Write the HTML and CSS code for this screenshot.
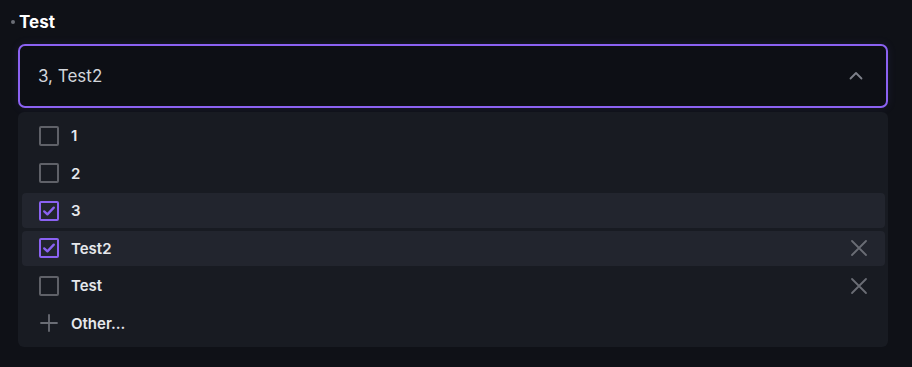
FILE: index.html
```html
<!DOCTYPE html>
<html>
<head>
<meta charset="utf-8">
<link rel="stylesheet" href="styles.css">
</head>
<body>
<div class="field">
  <div class="label"><span class="dot"></span><span class="label-text">Test</span></div>
  <div class="select">
    <span class="value">3, Test2</span>
    <svg class="chev" width="18" height="18" viewBox="0 0 18 18"><path d="M3.5 11.5 L9 6 L14.5 11.5" fill="none" stroke="#7d808a" stroke-width="1.8" stroke-linecap="round" stroke-linejoin="round"/></svg>
  </div>
  <div class="menu">
    <div class="opt"><span class="box"></span><span class="txt">1</span></div>
    <div class="opt"><span class="box"></span><span class="txt">2</span></div>
    <div class="opt hl"><span class="box on"><svg width="16" height="16" viewBox="0 0 16 16"><path d="M3.2 8.4 L6.4 11.4 L12.8 4.6" fill="none" stroke="#8b62f2" stroke-width="2.3" stroke-linecap="round" stroke-linejoin="round"/></svg></span><span class="txt">3</span></div>
    <div class="opt hl"><span class="box on"><svg width="16" height="16" viewBox="0 0 16 16"><path d="M3.2 8.4 L6.4 11.4 L12.8 4.6" fill="none" stroke="#8b62f2" stroke-width="2.3" stroke-linecap="round" stroke-linejoin="round"/></svg></span><span class="txt">Test2</span><svg class="x" width="18" height="18" viewBox="0 0 18 18"><path d="M2 2 L16 16 M16 2 L2 16" stroke="#6a6d75" stroke-width="1.8" stroke-linecap="round"/></svg></div>
    <div class="opt"><span class="box"></span><span class="txt">Test</span><svg class="x" width="18" height="18" viewBox="0 0 18 18"><path d="M2 2 L16 16 M16 2 L2 16" stroke="#6a6d75" stroke-width="1.8" stroke-linecap="round"/></svg></div>
    <div class="opt"><svg class="plus" width="20" height="20" viewBox="0 0 20 20"><path d="M10 2 V18 M2 10 H18" stroke="#6a6d75" stroke-width="1.8" stroke-linecap="round"/></svg><span class="txt">Other...</span></div>
  </div>
</div>
</body>
</html>
```
FILE: styles.css
```css
html, body {
  margin: 0;
  padding: 0;
  background: #0f1117;
  font-family: Inter, "Noto Sans", sans-serif;
}
.field {
  padding: 12px 24px 0 18px;
}
.label {
  display: flex;
  align-items: center;
  height: 20px;
  margin-left: -7px;
}
.dot {
  width: 4px;
  height: 4px;
  border-radius: 50%;
  background: #6b6e76;
  margin-right: 4px;
}
.label-text {
  color: #ffffff;
  font-size: 17px;
  font-weight: 700;
}
.select {
  margin-top: 12px;
  height: 60px;
  border: 2px solid #8b62f2;
  border-radius: 7px;
  background: #0d0f15;
  display: flex;
  align-items: center;
  padding: 0 21px 0 18px;
  box-shadow: 0 0 10px rgba(110, 90, 200, 0.12);
}
.value {
  flex: 1;
  color: #d2d5db;
  font-size: 17px;
}
.chev {
  display: block;
}
.menu {
  margin-top: 4px;
  background: #181b22;
  border-radius: 6px;
  padding: 6px 3px 6.5px 4px;
  display: flex;
  flex-direction: column;
  gap: 2.5px;
}
.opt {
  height: 35px;
  display: flex;
  align-items: center;
  padding: 0 17px 0 17px;
  border-radius: 4px;
}
.opt.hl {
  background: #22252e;
}
.box {
  width: 16px;
  height: 16px;
  border: 2px solid #5f6168;
  border-radius: 2px;
  display: flex;
  align-items: center;
  justify-content: center;
  flex: none;
}
.box.on {
  border-color: #8b62f2;
}
.box svg {
  display: block;
}
.plus {
  display: block;
  flex: none;
}
.txt {
  margin-left: 12px;
  flex: 1;
  color: #e6e8ec;
  font-size: 15px;
  font-weight: 600;
}
.x {
  display: block;
  flex: none;
}
```
